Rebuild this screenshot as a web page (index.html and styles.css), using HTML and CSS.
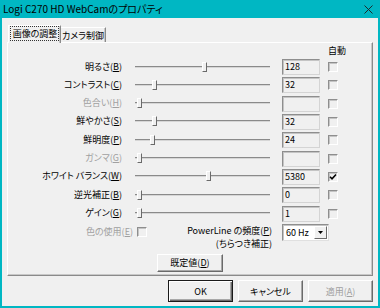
FILE: index.html
```html
<!DOCTYPE html>
<html lang="ja">
<head>
<meta charset="utf-8">
<title>Logi C270 HD WebCamのプロパティ</title>
<link rel="stylesheet" href="styles.css">
</head>
<body>
<div class="window">
  <div class="titlebar">
    <span class="title">Logi C270 HD WebCamのプロパティ</span>
    <svg class="close" width="9" height="9" viewBox="0 0 9 9"><path d="M0.5 0.5L8.5 8.5M8.5 0.5L0.5 8.5" stroke="#1e2a2b" stroke-width="1" fill="none"/></svg>
  </div>
  <div class="client">
    <div class="tabs">
      <div class="tab active"><span class="focus">画像の調整</span></div>
      <div class="tab">カメラ制御</div>
    </div>
    <div class="panel">
      <div class="auto-head">自動</div>
      <div class="grid">
        <div class="label">明るさ(<u>B</u>)</div>
        <div class="track"><div class="thumb" style="left:67px"></div></div>
        <div class="box">128</div>
        <div class="check"></div>

        <div class="label">コントラスト(<u>C</u>)</div>
        <div class="track"><div class="thumb" style="left:17px"></div></div>
        <div class="box">32</div>
        <div class="check"></div>

        <div class="label disabled">色合い(<u>H</u>)</div>
        <div class="track"><div class="thumb" style="left:2px"></div></div>
        <div class="box"></div>
        <div class="check"></div>

        <div class="label">鮮やかさ(<u>S</u>)</div>
        <div class="track"><div class="thumb" style="left:17px"></div></div>
        <div class="box">32</div>
        <div class="check"></div>

        <div class="label">鮮明度(<u>P</u>)</div>
        <div class="track"><div class="thumb" style="left:15px"></div></div>
        <div class="box">24</div>
        <div class="check"></div>

        <div class="label disabled">ガンマ(<u>G</u>)</div>
        <div class="track"><div class="thumb" style="left:2px"></div></div>
        <div class="box"></div>
        <div class="check"></div>

        <div class="label">ホワイト バランス(<u>W</u>)</div>
        <div class="track"><div class="thumb" style="left:71px"></div></div>
        <div class="box">5380</div>
        <div class="check"><svg width="8" height="8" viewBox="0 0 8 8"><path d="M1 3.8L3 5.8L7 1.5" stroke="#000" stroke-width="1.6" fill="none"/></svg></div>

        <div class="label">逆光補正(<u>B</u>)</div>
        <div class="track"><div class="thumb" style="left:2px"></div></div>
        <div class="box">0</div>
        <div class="check"></div>

        <div class="label">ゲイン(<u>G</u>)</div>
        <div class="track"><div class="thumb" style="left:2px"></div></div>
        <div class="box">1</div>
        <div class="check"></div>
      </div>
      <div class="bottom">
        <div class="color-use"><span class="disabled">色の使用(<u>E</u>)</span><div class="check"></div></div>
        <div class="powerline"><div>PowerLine の頻度(<u>P</u>)</div><div>(ちらつき補正)</div></div>
        <div class="dropdown"><span class="dd-text">60 Hz</span><span class="dd-btn"><svg width="5" height="3" viewBox="0 0 5 3"><path d="M0 0H5L2.5 3Z" fill="#000"/></svg></span></div>
      </div>
      <div class="default-row"><div class="btn default-btn">既定値(<u>D</u>)</div></div>
    </div>
    <div class="buttons">
      <div class="btn ok">OK</div>
      <div class="btn">キャンセル</div>
      <div class="btn disabled">適用(<u>A</u>)</div>
    </div>
  </div>
</div>
</body>
</html>
```
FILE: styles.css
```css
* { box-sizing: border-box; }
html, body { margin: 0; padding: 0; background: #ffffff; }
body {
  font-family: "Noto Sans CJK JP", "Noto Sans", sans-serif;
  font-size: 9px;
  line-height: 11px;
  color: #000;
  font-feature-settings: "palt";
}
u { text-decoration: underline; text-underline-offset: 1px; }

.window {
  width: 380px;
  height: 308px;
  background: #00b7c3;
  padding: 0 2px 2px 2px;
  display: flex;
  flex-direction: column;
}
.titlebar {
  height: 18px;
  flex: none;
  display: flex;
  align-items: center;
  justify-content: space-between;
  padding: 0 5px 0 1px;
}
.title { font-size: 10px; line-height: 12px; color: #000; }
.close { display: block; }

.client {
  flex: 1;
  background: #f0f0f0;
  display: flex;
  flex-direction: column;
  padding: 7px 5px 0 5px;
}

.tabs {
  display: flex;
  align-items: flex-end;
  height: 18px;
  margin-left: 1px;
  margin-bottom: -1px;
  position: relative;
  z-index: 1;
}
.tab {
  height: 15px;
  margin-bottom: 1px;
  width: 45px;
  background: #f0f0f0;
  border-top: 1px solid #fff;
  border-right: 1px solid #8a8a8a;
  box-shadow: inset -1px 0 0 #c8c8c8;
  display: flex;
  align-items: center;
  justify-content: center;
  line-height: 11px;
  padding-top: 1px;
}
.tab.active {
  width: 53px;
  height: 18px;
  margin-bottom: 0;
  border-left: 1px solid #fff;
  align-items: flex-start;
  padding-top: 1px;
}
.focus {
  outline: 1px dotted #333;
  outline-offset: 0;
  padding: 1px 1px 1px 2px;
  line-height: 11px;
}

.panel {
  height: 234px;
  flex: none;
  border: 1px solid;
  border-color: #fff #8a8a8a #8a8a8a #fff;
  box-shadow: inset -1px -1px 0 #c8c8c8;
  display: flex;
  flex-direction: column;
}
.auto-head {
  height: 16px;
  line-height: 16px;
  padding-left: 320px;
}

.grid {
  display: grid;
  grid-template-columns: 114px 148px 50px 18px;
  grid-template-rows: repeat(9, 16px);
  row-gap: 2.33px;
  align-items: center;
}
.label {
  grid-column: 1;
  text-align: right;
  white-space: nowrap;
  margin-bottom: 2px;
}
.disabled { color: #a0a0a0; }
.track {
  grid-column: 2;
  margin-left: 13px;
  width: 135px;
  height: 12px;
  position: relative;
  margin-bottom: 1px;
}
.track::before {
  content: "";
  position: absolute;
  left: 0;
  right: 0;
  top: 5px;
  height: 1px;
  background: #8a8a8a;
  border-bottom: 1px solid #d6d6d6;
  box-sizing: content-box;
}
.thumb {
  position: absolute;
  top: 1px;
  width: 5px;
  height: 10px;
  background: #f0f0f0;
  border: 1px solid;
  border-color: #fff #6a6a6a #6a6a6a #fff;
}
.box {
  grid-column: 3;
  margin-left: 12px;
  width: 38px;
  height: 16px;
  border: 1px solid;
  border-color: #8e8e8e #d4d4d4 #d4d4d4 #8e8e8e;
  box-shadow: inset 1px 1px 0 #c4c4c4;
  background: #f0f0f0;
  padding-left: 2px;
  line-height: 14px;
}
.check {
  width: 10px;
  height: 10px;
  border: 1px solid;
  border-color: #8e8e8e #fff #fff #8e8e8e;
  box-shadow: inset 1px 1px 0 #c4c4c4;
  background: #f0f0f0;
  display: flex;
  align-items: center;
  justify-content: center;
}
.grid .check { grid-column: 4; margin-left: 8px; }
.check svg { display: block; }

.bottom {
  display: flex;
  align-items: flex-start;
  margin-top: 2px;
  height: 26px;
}
.color-use {
  width: 139px;
  height: 16px;
  display: flex;
  justify-content: flex-end;
  align-items: center;
  gap: 4px;
}
.color-use span { line-height: 11px; }
.powerline {
  width: 125px;
  line-height: 13px;
  white-space: nowrap;
  display: flex;
  flex-direction: column;
  align-items: flex-end;
}
.dropdown {
  margin-left: 10px;
  width: 47px;
  height: 17px;
  display: flex;
  border: 1px solid;
  border-color: #8e8e8e #e0e0e0 #e0e0e0 #8e8e8e;
  box-shadow: inset 1px 1px 0 #c4c4c4;
  background: #fff;
  padding: 1px;
}
.dd-text { flex: 1; padding-left: 2px; line-height: 13px; }
.dd-btn {
  width: 13px;
  background: #f0f0f0;
  border: 1px solid;
  border-color: #fff #6a6a6a #6a6a6a #fff;
  display: flex;
  align-items: center;
  justify-content: center;
}
.dd-btn svg { display: block; }

.default-row {
  margin-top: 4px;
  padding-left: 149px;
}
.btn {
  width: 65px;
  height: 22px;
  background: #f0f0f0;
  border: 1px solid;
  border-color: #fff #6a6a6a #6a6a6a #fff;
  box-shadow: inset -1px -1px 0 #a8a8a8;
  display: flex;
  align-items: center;
  justify-content: center;
  line-height: 11px;
}
.default-btn { width: 66px; height: 18px; }
.buttons {
  display: flex;
  justify-content: flex-end;
  gap: 5px;
  margin-top: 4px;
}
.btn.ok {
  border-color: #1a1a1a;
  box-shadow: inset 1px 1px 0 #fff, inset -1px -1px 0 #6a6a6a, inset -2px -2px 0 #a8a8a8;
}
```
